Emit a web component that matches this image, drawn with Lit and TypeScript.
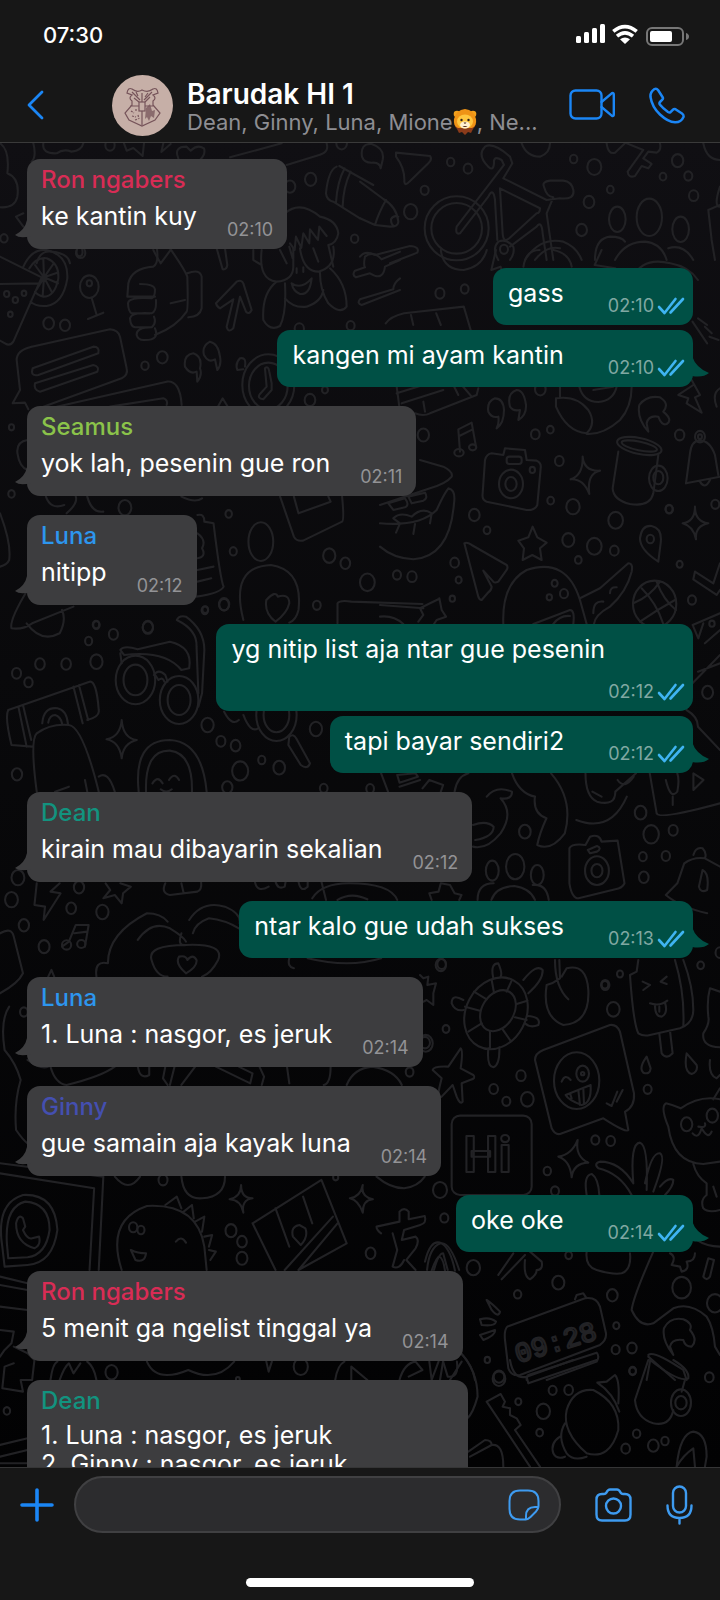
import { LitElement, html, svg, css, nothing } from "lit";
import { customElement, property } from "lit/decorators.js";

type Message = {
  from?: string;
  tone?: string;
  lines: string[];
  time: string;
  gap?: "tight" | "none";
  tail?: boolean;
  stacked?: boolean;
};

const messages: Message[] = [
  { from: "Ron ngabers", tone: "red", lines: ["ke kantin kuy"], time: "02:10", gap: "none" },
  { lines: ["gass"], time: "02:10", tail: false },
  { lines: ["kangen mi ayam kantin"], time: "02:10", gap: "tight" },
  { from: "Seamus", tone: "lime", lines: ["yok lah, pesenin gue ron"], time: "02:11" },
  { from: "Luna", tone: "blue", lines: ["nitipp"], time: "02:12" },
  { lines: ["yg nitip list aja ntar gue pesenin"], time: "02:12", tail: false, stacked: true },
  { lines: ["tapi bayar sendiri2"], time: "02:12", gap: "tight" },
  { from: "Dean", tone: "teal", lines: ["kirain mau dibayarin sekalian"], time: "02:12" },
  { lines: ["ntar kalo gue udah sukses"], time: "02:13" },
  { from: "Luna", tone: "blue", lines: ["1. Luna : nasgor, es jeruk"], time: "02:14" },
  { from: "Ginny", tone: "indigo", lines: ["gue samain aja kayak luna"], time: "02:14" },
  { lines: ["oke oke"], time: "02:14" },
  { from: "Ron ngabers", tone: "red", lines: ["5 menit ga ngelist tinggal ya"], time: "02:14" },
  { from: "Dean", tone: "teal", lines: ["1. Luna : nasgor, es jeruk", "2. Ginny : nasgor, es jeruk"], time: "" },
];

@customElement("chat-wallpaper")
export class ChatWallpaper extends LitElement {
  static styles = css`
    :host { display: block; }
    svg { display: block; width: 100%; height: 100%; }
    .ink { fill: none; stroke: #222225; stroke-linecap: round; stroke-linejoin: round; }
    .ink * { vector-effect: non-scaling-stroke; stroke-width: 2.1px; }
    .face { font-family: Roboto, "Liberation Sans", sans-serif; font-weight: 700; }
    .digits { font-family: "Liberation Mono", monospace; font-weight: 400; }
  `;

  private dots(points: number[][]) {
    return points.map(([x, y, r]) => svg`<ellipse cx=${x} cy=${y} rx=${r} ry=${r * 1.15}></ellipse>`);
  }

  private narrowDots(points: number[][]) {
    return points.map(([x, y, r]) => svg`<ellipse cx=${x} cy=${y} rx=${r * 0.7} ry=${r * 1.15}></ellipse>`);
  }

  render() {
    return html`<svg viewBox="0 143 720 1324" preserveAspectRatio="xMidYMin slice" aria-hidden="true">
      <g class="ink">
        <g transform="scale(.3333)">
          <path d="M0 430Q30 450 22 520Q60 535 52 590Q45 625 0 622M100 430Q110 470 95 485M130 430Q125 462 170 460Q190 445 215 455Q245 452 250 430M372 430l8 22l20-8l28 24l4-38M490 430l-6 26l28-24M535 475Q520 440 560 440Q570 450 572 452Q592 432 612 445Q618 462 600 480M690 472Q770 450 845 430M980 430q8 26-20 34L860 495"/>
          <path d="M1010 500Q985 510 978 580Q980 600 1000 605L1080 655M1018 498L1120 555M1034 505Q1012 545 1008 608M1052 515Q1030 560 1028 620"/>
          <path d="M855 640Q900 600 960 650Q1010 660 1015 700Q1010 730 985 735L1000 800M870 730l14 20l4-40l16 34l6-44l18 30l2-42l24 32l4-40l22 28"/>
          <path d="M70 640L48 650L70 680M110 790Q120 750 155 755Q205 760 210 790M232 745q-6 20 4 24q16 0 10-24M460 750q10 20 22 40l30-40"/>
          ${this.dots([[330, 436, 14], [932, 538, 17], [870, 560, 16], [12, 715, 11], [1064, 716, 11], [1025, 430, 16]])}
        </g>
        <g transform="translate(360 0) scale(.3333)">
          <path d="M6 470Q0 430 35 432Q75 445 68 480L62 505Q60 488 40 488Q12 490 6 470M108 458L210 468Q218 478 205 490L148 545Q135 560 133 545Q135 505 108 470Z"/>
          <path d="M0 545L70 597Q110 620 115 665Q115 680 90 680L45 675L0 655M78 600Q55 640 45 675M115 650q-15-5-22 8q0 15 8 20"/>
          <path d="M385 500Q350 465 375 440Q400 425 450 470L457 490L430 535L560 600L600 595Q645 600 640 570Q635 545 610 542L570 542Q545 545 552 560Q560 590 580 592L560 640L580 780M385 500Q400 515 402 490Q400 465 425 480L432 495L290 680Q285 705 300 700L385 590Q400 560 405 600L412 720M420 565L540 625Q540 640 530 640L448 715Q430 730 428 700ZM450 740L530 680Q545 660 548 700L560 780"/>
          <circle cx="290" cy="685" r="96" /><circle cx="290" cy="685" r="76"/><path d="M495 780Q540 710 610 725Q650 740 665 780M525 780Q560 735 600 745"/>
          <path d="M415 780Q395 745 415 725Q440 715 460 740Q465 760 450 780M0 770Q15 750 45 765L150 738Q180 740 172 758L90 790"/>
          <path d="M485 430Q500 470 540 470Q570 460 570 430M740 430q5 35 25 28l30-28M800 430L850 450L803 515Q805 535 825 528L845 498L865 505L875 492L850 475L865 455L890 458Q905 450 900 430M1030 430Q1040 480 1080 480"/>
          <ellipse cx="772" cy="658" rx="25" ry="38"/><ellipse cx="868" cy="652" rx="38" ry="56"/><ellipse cx="962" cy="688" rx="25" ry="38"/>
          <path d="M705 780Q705 715 750 710Q785 710 795 725M765 780Q795 725 855 725Q905 730 920 780M925 745Q970 730 1000 780M1080 560q-20 60 0 60M1080 615L1045 630L1055 720L1065 780"/>
          ${this.dots([[272, 486, 11], [324, 506, 13], [194, 571, 12], [152, 635, 20], [641, 477, 11], [703, 501, 21], [751, 569, 10], [687, 606, 16], [665, 690, 16], [909, 530, 10], [985, 528, 12], [953, 482, 17], [1001, 587, 14], [432, 748, 12]])}
        </g>
        <g transform="translate(0 240) scale(.3333)">
          <path d="M0 50L125 112L40 305Q30 320 15 310L0 302M0 132L120 130M70 80Q95 25 140 30Q205 45 202 115Q190 190 140 198Q105 200 92 185M88 85Q110 50 140 55Q178 70 175 115Q165 170 130 170Q112 165 105 155M132 112L130 58M132 112L105 75M132 112L160 72M132 112L172 98M132 112L174 130M132 112L155 155M132 112L128 168M132 112L110 148"/>
          <ellipse cx="268" cy="140" rx="28" ry="34"/><path d="M275 174L290 225M264 237L310 218"/>
          <path d="M470 20Q478 70 460 80Q395 85 385 130L382 170L465 170M420 132Q465 132 465 150Q465 170 455 175Q385 170 384 190Q385 215 395 220L450 220M468 180Q470 215 455 220Q395 215 390 235Q392 260 405 262L455 262M462 230Q470 250 455 262Q408 262 410 285Q415 302 435 300Q480 300 465 265M510 25Q555 90 562 110Q565 210 560 215Q530 260 465 285M512 190L555 180M562 100Q600 85 605 110V205Q600 230 565 232"/>
          <path d="M648 190L710 125Q725 118 730 130L755 210Q748 225 738 215L720 170L700 265Q685 280 680 260L700 178L660 205Q650 200 648 190M650 25L668 88Q680 90 682 75L675 25"/>
          <path d="M785 75L760 60L760 30M785 30Q775 120 830 125Q880 120 880 80L880 25M900 25Q910 95 955 95Q1010 80 1000 20M830 125Q785 160 790 240Q810 275 840 258Q860 220 855 130M960 98Q960 150 985 190Q1020 225 1040 200Q1040 130 990 85M855 175Q880 205 920 200Q965 185 970 150M875 130Q905 150 935 115Q930 165 900 162Q880 155 875 130M890 85v14M910 82v14M840 30l20 40M868 20l10 35M940 25l15 40"/>
          <path d="M1200 35L1145 58Q1120 30 1095 50Q1090 75 1095 82L1065 92Q1055 105 1068 112L1110 100Q1150 125 1155 80L1200 60M1200 115Q1180 130 1180 148L1080 178Q1070 190 1085 195L1200 150"/>
          <path d="M95 320L330 268Q355 270 360 290L380 385Q385 405 365 415L130 500M95 320Q50 330 50 360L60 450L38 490L75 488L85 508M98 385L280 320Q300 320 295 340L115 405Q90 410 98 385M105 430L280 375Q300 380 292 395L120 455Q100 450 105 430M170 500L500 425Q540 420 545 495M330 500L490 475Q505 480 500 495"/>
          <path d="M600 385Q608 350 580 340Q550 345 555 380Q570 405 590 395L592 425Q608 405 600 385M660 350Q655 310 630 305Q605 318 612 345Q625 370 645 358L652 390Q665 375 660 350M735 380Q740 350 720 355Q705 370 712 390L730 388M795 385Q805 375 808 395L815 430L815 450L790 478Q770 475 780 462L800 440ZM655 498L668 475L682 498"/>
          <ellipse cx="805" cy="435" rx="78" ry="92"/><ellipse cx="805" cy="438" rx="58" ry="70"/>
          ${this.dots([[20, 162, 8], [46, 180, 8], [72, 160, 7], [31, 223, 7], [268, 130, 8], [146, 250, 16], [195, 256, 15], [487, 352, 16], [435, 377, 11], [242, 38, 14], [898, 266, 14], [1052, 257, 12], [930, 480, 16], [975, 450, 9]])}
        </g>
        <g transform="translate(380 380) scale(.3333)">
          <path d="M50 20L60 95M50 40L130 15M65 70L190 30M130 65L135 95M105 100Q130 110 150 100L290 45L295 25M220 15L235 45M245 15L275 50"/>
          <path d="M372 90Q370 55 345 55Q320 65 325 95Q335 115 355 110Q358 130 350 145Q372 130 372 90M438 75Q432 30 410 30Q380 40 390 80Q400 95 420 90L415 120Q440 105 438 75"/>
          <path d="M528 55Q590 45 625 90Q650 130 620 160Q560 155 528 80ZM540 20V50M755 20Q755 80 720 120Q670 165 620 162M598 20Q610 65 655 66Q700 62 710 20M640 30L700 20"/>
          <path d="M805 155Q770 115 778 75Q800 45 840 52Q870 70 850 95Q880 120 860 132Q845 138 835 110Q805 105 800 130ZM940 15L895 45L925 55L920 70L965 98L945 52L960 45L935 0M1020 25Q995 40 1010 80"/>
          <path d="M240 215L235 148L275 128L288 200M238 168L278 148"/><ellipse cx="237" cy="218" rx="14" ry="11"/><ellipse cx="278" cy="202" rx="11" ry="9"/>
          <path d="M315 240Q320 222 335 220L370 225L375 205L435 210L440 240L470 242Q485 248 482 265L472 375Q465 392 440 390L320 365Q305 360 308 340Z"/><rect x="380" y="230" width="45" height="22" rx="8"/><ellipse cx="393" cy="312" rx="36" ry="43"/><ellipse cx="393" cy="312" rx="17" ry="21"/>
          <path d="M608 230Q612 275 660 272Q620 280 628 342Q610 295 572 298Q610 285 608 230M945 380Q945 425 985 430Q945 438 948 478Q940 438 908 430Q945 425 945 380"/>
          <ellipse cx="778" cy="198" rx="68" ry="24" transform="rotate(12 778 198)"/><ellipse cx="778" cy="198" rx="54" ry="13" transform="rotate(12 778 198)"/><path d="M715 215L698 325Q700 360 750 372Q810 382 820 340L835 225"/><ellipse cx="835" cy="295" rx="28" ry="38"/><ellipse cx="835" cy="293" rx="15" ry="20"/>
          <path d="M918 310L930 220Q935 180 960 182Q990 182 1005 225L1015 285M918 310L1020 290M960 305Q975 330 990 300"/>
          <path d="M120 240L190 260Q220 275 215 290Q200 310 150 325L0 375M0 430Q120 440 170 390Q190 345 205 325Q228 330 222 370Q210 530 100 538Q40 535 0 500M40 415Q60 395 95 410Q125 380 155 400L150 430M40 415L60 430L48 458M105 432L100 462M25 370L75 355Q90 375 75 382L40 390ZM85 350L135 338Q145 355 130 362L95 370Z"/>
          <path d="M458 440L472 472L500 488L480 505L485 540L457 525L428 540L432 505L415 482L445 472ZM253 490Q260 485 275 495L380 555Q385 562 380 570L355 605Q345 610 340 605L310 572L335 620Q335 630 325 637L305 660Q298 660 295 650Z"/>
          <path d="M835 545Q780 510 780 475Q785 435 815 438Q848 445 842 490ZM0 675L130 685M0 710Q40 705 70 732M178 655L185 690L198 710L170 720L162 732M150 670L175 658M150 670L120 685L130 705L115 725"/>
          <path d="M370 732Q365 610 440 570Q560 530 600 660L620 732M600 655L660 625L745 550Q760 550 755 575Q740 635 690 680Q645 705 642 732M460 732L570 690Q585 690 580 732M640 700Q640 660 670 665M690 640Q690 620 710 622M520 732Q540 705 570 708"/>
          <ellipse cx="824" cy="672" rx="65" ry="70"/><path d="M760 670Q810 650 840 605M780 725Q830 690 885 660M785 625Q830 670 850 732M830 605Q850 660 888 690M945 575L1000 610L1020 550M945 575L940 598L1010 645L1020 630M938 735L1020 700M940 740L955 775L970 730"/>
          ${this.dots([[130, 165, 17], [466, 163, 13], [511, 149, 10], [538, 243, 13], [457, 270, 8], [512, 362, 10], [579, 380, 20], [283, 405, 16], [321, 451, 10], [565, 480, 18], [643, 499, 22], [595, 540, 10], [703, 512, 13], [707, 421, 22], [868, 388, 11], [899, 165, 14], [960, 170, 15], [960, 170, 6], [1006, 373, 12], [811, 477, 11], [899, 553, 9], [936, 660, 12], [224, 548, 13], [236, 600, 9], [96, 590, 14], [51, 585, 12], [217, 656, 8], [524, 610, 9], [508, 652, 8], [552, 641, 12], [481, 28, 16], [996, 731, 8]])}
        </g>
        <g transform="translate(0 250) scale(.4592 .3333)">
          <path d="M60 570Q35 575 38 610Q42 650 60 660M100 740Q110 780 140 765M145 790Q170 760 165 740M190 740Q200 790 225 785M430 795Q445 790 445 815L465 820Q480 990 487 1010Q480 1030 428 1040M430 850Q450 870 440 895Q450 920 430 925M430 960L465 950M430 995L460 985M395 740Q425 760 440 745M610 740L640 860Q645 875 660 872L745 815Q750 810 745 740M640 740L650 790L720 755L715 740M0 790Q25 880 20 930Q15 945 0 950M60 1020Q20 1110 25 1135Q50 1140 70 1120L160 1070M58 1120Q90 1180 130 1150Q145 1110 135 1080M1310 0L1295 45L1340 55M1380 80Q1400 20 1460 40Q1500 50 1520 90M960 0Q965 60 1010 60Q1050 50 1060 0M1080 0L1070 60L1090 50L1095 70M1140 50Q1145 0 1175 0M1205 0Q1240 10 1245 50M840 220Q850 200 880 190L1010 170L1025 240M895 195L900 225M950 190L960 225"/>
          <path d="M1508 215L1540 280M1520 205l20 20M1535 230l15 20M1545 260l20 10"/>
          <ellipse cx="568" cy="875" rx="27" ry="58"/><path d="M530 1110Q500 950 590 945Q660 960 650 1080Q645 1110 630 1118M580 1050Q600 1020 605 1040Q630 1030 630 1060Q625 1090 600 1115Q575 1090 580 1050M735 1120V1060Q740 1050 765 1055L920 1062"/>
          ${this.narrowDots([[25, 532, 8], [25, 732, 10], [272, 773, 20], [498, 792, 10], [508, 904, 11], [717, 917, 19], [752, 940, 15], [800, 997, 23], [690, 1066, 12], [488, 1063, 16], [447, 1079, 9], [209, 1124, 10], [322, 1131, 16], [958, 130, 14], [1012, 117, 12], [1457, 777, 11]])}
        </g>
        <g transform="translate(0 600) scale(.4592 .3333)">
          <path d="M385 60Q390 45 405 50Q445 90 445 150L440 280L432 320M385 60Q430 90 428 140L432 280M262 150Q270 135 300 148L370 125Q420 140 412 205L395 210Q360 150 270 165ZM262 160L265 190M335 225Q345 205 360 225L365 245M338 225L345 240Q355 230 358 245"/>
          <ellipse cx="295" cy="240" rx="43" ry="73"/><ellipse cx="295" cy="240" rx="26" ry="46"/><ellipse cx="390" cy="300" rx="42" ry="72"/><ellipse cx="390" cy="300" rx="25" ry="45"/>
          <path d="M18 330L195 245Q210 240 215 330Q218 350 190 360M18 330Q10 350 25 435L70 440M40 320L58 440M50 315L68 420M160 260L180 370M172 256L192 360M92 370Q95 320 125 325Q145 330 148 372M105 368Q108 345 120 345Q132 350 135 370M80 575Q65 420 80 400Q110 370 150 375Q180 380 215 575M215 530Q235 510 250 575M120 575L150 560M185 540L190 575M265 360Q268 415 298 420Q268 430 265 475Q260 425 232 418Q262 410 265 360M302 575Q290 420 370 420Q440 425 450 575M318 575Q315 450 370 452Q420 460 418 575M332 550q12-25 22 0M368 540q12-25 22 0M350 568q12 14 24 0"/>
          <ellipse cx="602" cy="345" rx="44" ry="78"/><ellipse cx="602" cy="345" rx="28" ry="52"/><path d="M630 410Q640 400 645 415L675 490Q670 510 655 495L628 435ZM488 335Q505 380 520 360M530 345Q545 400 562 385"/>
          <path d="M830 520L845 575M865 525L905 520L910 530L870 548ZM870 560L915 540M920 565L935 540L965 555L960 575M990 575Q995 530 1020 520M1115 520Q1130 580 1165 590Q1160 640 1190 655Q1175 700 1170 735Q1200 755 1230 700Q1250 600 1200 520M1060 590Q1080 555 1115 575Q1115 600 1090 595Q1120 640 1090 700Q1060 750 1030 740M1030 675Q1060 660 1075 680Q1075 710 1035 720M1275 520Q1275 590 1300 605Q1340 620 1340 575L1385 520M1290 575L1310 590M1345 540Q1360 570 1380 530M1255 660Q1330 700 1365 590M1415 520L1430 640Q1435 660 1568 610M1450 540Q1460 600 1475 575Q1480 540 1475 520M1465 590V615M1510 520V570L1532 540ZM1535 130L1568 90M1520 215L1568 190M1508 250L1568 165M1495 330Q1520 350 1520 380L1568 450"/>
          <path d="M1240 745Q1245 730 1275 735L1285 710Q1305 700 1310 725L1345 722L1360 850Q1355 865 1340 868L1260 895Q1245 895 1240 850Z"/><ellipse cx="1300" cy="812" rx="26" ry="43"/><ellipse cx="1300" cy="812" rx="12" ry="20"/><path d="M1280 750L1300 738Q1312 745 1300 755L1285 760ZM1450 885L1475 850L1490 790Q1510 770 1535 775L1568 800M1450 885Q1480 920 1540 940M1530 810Q1545 820 1540 870Q1525 880 1522 860ZM1510 765Q1515 740 1530 745Q1540 760 1535 775"/>
          <ellipse cx="1072" cy="812" rx="14" ry="30"/><ellipse cx="1122" cy="800" rx="20" ry="38"/><ellipse cx="1170" cy="825" rx="14" ry="30"/><path d="M1040 900Q1040 850 1075 850M1070 900Q1080 860 1120 858Q1155 865 1165 900M1195 900Q1190 850 1160 855M940 900L935 880L955 875L960 850L980 855L990 880L1005 885L1000 900M700 845L710 900M680 895Q700 850 760 850Q850 850 865 900M735 900Q765 875 800 898M555 845Q560 880 585 860M600 845Q605 870 620 860L622 845M650 845Q655 880 670 860V845"/>
          <path d="M80 850L75 915L98 920L95 960L132 880L110 875L130 850M230 850L240 870L225 895L250 885L265 910L268 880L285 860L262 850M360 850Q350 880 370 885L430 875Q440 870 438 845M395 850L400 880M135 1040L150 1025L165 975L193 975L185 1040M162 1000L190 995"/><ellipse cx="145" cy="1035" rx="10" ry="14"/><ellipse cx="177" cy="1032" rx="9" ry="12"/>
          <path d="M210 1130Q205 1080 235 1090Q235 1000 320 940Q350 940 365 965M300 1020Q330 960 370 985Q400 1010 405 1025M395 1000Q385 1040 405 1035Q490 1030 475 1080Q460 1120 440 1130M405 1035Q320 1035 330 1080Q340 1130 365 1130M412 960Q440 900 490 920Q525 940 522 970M420 1000Q425 970 455 955Q490 960 520 985M405 1120Q380 1090 390 1070Q405 1065 408 1080Q420 1060 428 1080Q430 1100 405 1120M0 1000Q25 980 30 1010L50 1120Q40 1150 0 1180M105 1130L112 1110L118 1130M670 1075Q760 1105 830 1075M630 1075Q625 1100 640 1105"/>
          ${this.narrowDots([[210, 75, 10], [193, 123, 11], [247, 103, 14], [322, 83, 16], [87, 192, 15], [144, 192, 15], [210, 185, 19], [36, 220, 14], [62, 247, 13], [37, 523, 16], [452, 375, 19], [481, 424, 14], [513, 437, 15], [570, 480, 11], [523, 513, 25], [608, 503, 18], [495, 562, 16], [688, 387, 19], [446, 31, 10], [488, 14, 15], [1541, 277, 17], [1395, 638, 18], [1466, 691, 14], [1418, 703, 24], [1143, 695, 18], [1400, 770, 12], [1450, 768, 13], [1402, 832, 15], [39, 833, 20], [25, 899, 20], [172, 862, 16], [155, 925, 15], [223, 936, 19], [96, 1040, 17], [52, 976, 16], [705, 565, 12], [806, 566, 12], [1568, 1058, 14], [960, 1095, 16], [1318, 1155, 13]])}
        </g>
        <g transform="translate(0 970) scale(.4592 .3333)">
          <path d="M20 110Q0 150 10 240Q35 280 45 330Q30 400 35 480Q50 510 60 520M60 270Q90 300 105 290M110 290Q120 340 145 345Q220 320 250 290M300 290Q305 330 325 315V290M360 290L355 325L365 345M380 290L370 345M425 290L395 345M470 290L545 340L550 310L520 290M565 290L575 320L570 345M625 290L630 340M705 345Q720 340 720 290M755 345Q770 295 810 290Q860 300 875 345"/>
          <path d="M0 580L225 620L215 900M0 610L205 655L195 900M5 830Q-10 700 50 675Q120 670 125 780Q115 880 60 885L10 890L5 830M15 820Q10 710 55 695Q108 700 108 780Q100 855 60 862L18 865ZM35 760Q40 730 50 745L55 770L50 780Q60 810 70 805L85 800Q90 825 75 835Q35 820 35 760"/>
          <path d="M265 900Q230 750 320 708Q430 700 445 830L450 900M360 705L385 680L395 715M400 725L418 705L422 745M425 755L445 740L440 785M445 800L462 795L455 830M455 840L470 845L458 870M285 840Q300 850 318 850Q315 880 295 870ZM383 815Q395 795 405 818M250 620Q280 670 305 620M395 620Q400 690 440 685Q490 680 490 620M525 645Q525 685 550 685Q525 690 530 728Q525 690 500 688Q525 680 525 645M790 645Q785 680 812 688Q790 690 790 728Q780 690 762 685Q785 680 790 645M820 620Q850 655 880 655Q910 650 925 620"/>
          <path d="M550 760L700 630L755 820L650 900M550 760L600 900M600 715L630 830M660 680L680 760M725 740L620 900M735 760L650 900M652 765Q632 770 638 800L655 825Q672 800 665 775Z"/>
          <path d="M820 770L870 755V725Q880 710 890 725V748L925 738Q930 760 915 765L880 780L875 810L905 800Q915 810 905 835L885 870L905 900M830 790Q820 780 820 770M855 790L865 840L855 890Q870 900 880 870M930 900Q935 830 960 820Q980 815 1000 900M945 900Q955 850 965 850L975 900"/>
          <path d="M0 920L60 940M0 945L60 960M0 1010L60 1020M0 1080L30 1085L25 1120L10 1140L0 1160M30 1130L60 1150L75 1170L70 1230L45 1230L50 1265L5 1255L10 1190L30 1180M110 1230Q115 1180 125 1175M210 1230Q205 1190 190 1175M130 1230Q140 1190 150 1180L160 1210L175 1180M320 1175Q340 1240 410 1200Q470 1240 510 1175M580 1175L585 1205L592 1175M730 1230Q735 1185 750 1175M765 1230V1190L800 1230M870 1230Q880 1180 905 1175M890 1220L920 1200L905 1175M935 1175L940 1230L955 1175M1000 1145Q1040 1200 1040 1280Q1030 1330 1018 1345M965 1175L975 1220Q1000 1225 995 1175M0 1425L60 1405M0 1460L60 1440M0 1480L60 1480"/>
          ${this.narrowDots([[52, 126, 12], [892, 306, 12], [927, 220, 22], [355, 630, 14], [503, 782, 17], [527, 815, 15], [527, 865, 17], [731, 622, 8], [807, 850, 15], [290, 772, 13], [307, 780, 11], [243, 1207, 19], [655, 1190, 22], [15, 1323, 10], [518, 1228, 6]])}
        </g>
        <g transform="translate(420 960) scale(.3333)">
          <ellipse cx="228" cy="160" rx="90" ry="112" transform="rotate(28 228 160)"/><ellipse cx="234" cy="152" rx="48" ry="66" transform="rotate(32 234 152)"/>
          <path d="M275 62L260 95M322 122L290 132M320 180L285 172M270 240L248 208M210 265V215M145 215L185 190M135 140L180 152M162 95L200 118M215 60L222 98M220 55Q210 10 235 10Q248 40 242 50M310 60Q350 10 368 30Q370 60 325 100M130 120Q95 100 95 130Q105 155 132 150M322 168Q365 170 355 195Q330 205 315 190M205 265Q200 320 220 322Q240 315 238 262"/>
          <path d="M405 0Q405 80 445 118M418 0L420 55Q400 70 380 75Q365 170 430 195Q510 190 505 90Q500 10 440 25L425 50M0 45L10 55L25 50L22 75L48 70L40 100V135L20 120L0 130"/>
          <path d="M655 0L650 35L630 45Q640 190 655 220Q670 230 690 225L780 205Q820 190 820 150Q820 80 790 0M765 0Q795 100 790 200M668 65L690 75L670 90M740 50L722 65L740 72M690 130Q720 140 742 122M705 135Q705 170 725 170Q745 160 735 128M718 140V155M718 220L725 280Q740 300 758 280L750 212M900 95L870 85Q860 120 865 170Q870 190 850 220Q845 260 900 262"/>
          <path d="M122 265Q130 270 122 325L160 345Q170 355 150 360L125 370L128 425Q120 435 110 410L98 375L65 410Q50 415 60 375L65 355L38 330Q40 318 85 320Z"/>
          <path d="M370 270L570 195Q590 192 600 215L642 400Q645 440 615 455L625 510Q620 520 550 475L420 522Q405 525 395 505L345 300Q345 280 370 270Z"/><ellipse cx="470" cy="362" rx="68" ry="85"/><ellipse cx="488" cy="341" rx="19" ry="24"/><circle cx="488" cy="341" r="5"/><path d="M425 365Q435 340 452 360M437 405L512 375Q515 430 485 435Q445 420 437 405M450 400L455 415M475 390L480 435M490 385L492 430M560 430L575 438L592 395M590 425L608 390"/>
          <path d="M680 290Q655 325 670 338Q690 345 692 325ZM800 280Q790 335 815 342Q835 335 830 315ZM870 300Q865 345 890 355L900 345M745 500Q720 440 738 430Q760 435 782 445Q840 405 900 418M745 500Q760 610 850 612L900 605M880 418L900 385M820 612Q830 650 860 670V705Q840 720 850 745Q865 760 900 750M880 680L890 710M835 500Q860 505 855 490M818 520Q835 540 845 505Q865 540 875 515"/><ellipse cx="800" cy="493" rx="17" ry="21"/><ellipse cx="877" cy="467" rx="17" ry="21"/>
          <rect x="95" y="467" width="240" height="238" rx="25"/><text class="face" x="130" y="636" font-size="150">Hi</text>
          <path d="M473 540Q465 590 505 608Q460 610 455 652Q450 600 415 590Q455 585 473 540M500 705Q490 645 515 642Q535 655 538 705M635 705Q600 640 535 625Q520 610 540 605Q600 605 640 670M640 670Q630 550 660 548Q685 555 680 690M675 670Q695 575 720 580Q740 590 700 695M720 680Q745 650 760 660Q760 680 735 705"/>
          <path d="M235 945L280 880M245 958L315 885M315 900Q310 950 330 958Q350 945 350 930Q370 930 365 905L330 875M500 875Q495 920 530 930Q580 945 605 940Q635 930 630 880M700 875Q640 1010 635 1050Q660 1105 700 1090L760 1045Q810 1025 860 1070Q880 1100 885 1160L900 1185M750 880Q770 890 755 915L780 920L785 935Q810 930 800 905Q825 905 825 880M865 895L850 950Q860 965 870 950L882 900ZM830 840Q860 860 900 860"/>
          <path d="M262 1100L495 1015Q530 1010 540 1040L558 1120Q560 1140 540 1155L300 1245Q275 1250 265 1225L255 1140Q252 1110 262 1100M465 1018L470 1005L490 1000L498 1012M320 1250V1260M325 1245L530 1178Q540 1190 530 1205L380 1260M200 1020Q215 1030 240 1055Q235 1075 215 1050ZM180 1078Q210 1070 228 1085Q225 1100 185 1095ZM180 1125L225 1110Q228 1125 190 1140Z"/>
          <text class="digits" x="294" y="1210" font-size="84" transform="rotate(-17 294 1210)">09:28</text>
          <path d="M760 1185Q725 1140 732 1105Q750 1070 790 1078Q820 1090 810 1110Q835 1140 815 1160Q795 1160 790 1140Q755 1135 750 1160ZM685 1185Q700 1170 790 1230L800 1260M685 1190L765 1260M690 1205L680 1260M15 905Q30 840 60 848Q90 860 105 932M35 932Q50 890 58 890Q70 895 75 932M60 1260L70 1200M120 1175Q160 1220 165 1260M90 1260L125 1205"/>
          ${this.dots([[65, 12, 13], [78, 207, 10], [15, 248, 15], [303, 347, 14], [221, 387, 13], [259, 424, 12], [322, 418, 19], [555, 74, 10], [600, 42, 9], [580, 148, 19], [842, 16, 10], [683, 388, 12], [526, 540, 12], [572, 543, 13], [382, 633, 11], [405, 693, 12], [60, 690, 21], [73, 774, 12], [160, 923, 20], [415, 968, 18], [293, 1003, 11], [577, 1006, 16], [446, 886, 10], [785, 983, 28], [589, 1097, 9], [587, 1169, 12], [636, 1164, 14], [638, 1232, 10], [202, 1200, 8], [237, 1250, 16], [885, 1030, 24]])}
        </g>
        <g transform="translate(360 1360) scale(.3333)">
          <path d="M380 125L422 102L435 125L428 140L450 145L450 165L470 175L482 195L465 210L540 320M380 125L510 320M325 275L375 240Q395 240 395 255L330 290M395 255Q430 250 430 320"/>
          <path d="M700 90Q640 85 620 150Q605 215 680 280Q750 300 775 210Q780 130 700 90M712 68Q760 100 778 155M712 68L740 65L765 45Q780 60 775 130M615 190Q590 230 620 280Q640 305 680 290M600 230Q570 250 580 280Q590 300 615 290"/>
          <path d="M865 0L825 120Q830 175 880 190Q930 200 940 150M870 0Q960 70 985 55Q990 30 940 0M975 60L965 95"/><ellipse cx="963" cy="128" rx="30" ry="40"/><ellipse cx="963" cy="128" rx="17" ry="20"/>
          <path d="M950 320Q960 220 1000 215Q1040 220 1040 290L1035 320M950 320Q970 285 1000 265L1005 320M450 0Q460 60 500 50L640 0M500 50L505 70L710 0"/>
          ${this.dots([[417, 56, 19], [475, 125, 9], [550, 154, 20], [578, 91, 12], [626, 90, 13], [539, 218, 10], [818, 34, 10], [1048, 52, 13], [830, 221, 11], [797, 266, 13], [880, 257, 16], [915, 243, 11]])}
        </g>
      </g>
    </svg>`;
  }
}

@customElement("chat-bubble")
export class ChatBubble extends LitElement {
  @property({ attribute: false }) message!: Message;

  static styles = css`
    :host { display: flex; }
    .bubble { position: relative; box-sizing: border-box; border-radius: 13px; }
    .in { background: #3d3d3f; padding: 8px 14px 9px; }
    .out { background: #005045; padding: 11px 8px 9px 15px; margin-left: auto; }
    .long { min-width: 441px; padding-bottom: 60px; }
    .name { margin: 0 0 9px; font-size: 24px; line-height: 26px; font-weight: 500; }
    .long .name { margin-bottom: 7px; }
    .red { color: #d82c55; }
    .lime { color: #8bc34a; }
    .blue { color: #2d96ee; }
    .teal { color: #12937f; }
    .indigo { color: #444fb0; }
    .row { display: flex; align-items: flex-end; gap: 30px; }
    .out .row { gap: 44px; }
    .stacked .row { flex-direction: column; gap: 10px; }
    .text { margin: 0; padding-bottom: 9px; color: #fff; font-size: 25px; line-height: 29px; white-space: nowrap; }
    .out .text { padding-bottom: 8px; }
    .stacked .text { padding-right: 80px; }
    .meta { display: flex; align-items: center; gap: 3px; font-size: 18px; line-height: 20px; color: #939396; }
    .out .meta { color: #80a8a2; }
    .ticks { display: block; width: 28px; height: 18px; fill: none; stroke: #3fb4f2; stroke-width: 2.6; stroke-linecap: round; stroke-linejoin: round; }
    .tail { position: absolute; bottom: 9px; width: 17px; height: 22px; }
    .in .tail { right: calc(100% - 4px); fill: #3d3d3f; }
    .out .tail { left: calc(100% - 1px); fill: #005045; }
  `;

  render() {
    const m = this.message;
    const incoming = !!m.from;
    const long = m.lines.length > 1;
    return html`<article class="bubble ${incoming ? "in" : "out"} ${m.stacked ? "stacked" : ""} ${long ? "long" : ""}">
      ${incoming ? html`<h2 class="name ${m.tone}">${m.from}</h2>` : nothing}
      <div class="row">
        <p class="text">${m.lines.map((line, i) => html`${i ? html`<br>` : nothing}${line}`)}</p>
        ${m.time
          ? html`<div class="meta">
              <time>${m.time}</time>
              ${incoming
                ? nothing
                : html`<svg class="ticks" viewBox="0 0 28 18" role="img" aria-label="Read"><path d="M2 10l5.500 6L18.500 2M13.500 15.500L26 2"/></svg>`}
            </div>`
          : nothing}
      </div>
      ${m.tail === false || long
        ? nothing
        : incoming
          ? html`<svg class="tail" viewBox="0 0 17 22" aria-hidden="true"><path d="M13 2Q11 12 1 17Q6 21 17 18V2Z"/></svg>`
          : html`<svg class="tail" viewBox="0 0 17 22" aria-hidden="true"><path d="M0 0Q4 12 17 17Q11 22 0 20Z"/></svg>`}
    </article>`;
  }
}

@customElement("app-root")
export class AppRoot extends LitElement {
  static styles = css`
    :host {
      display: flex;
      flex-direction: column;
      height: 100vh;
      overflow: hidden;
      background: #171717;
      color: #fff;
      font-family: Inter, "Liberation Sans", sans-serif;
    }
    svg { display: block; }
    button { padding: 0; border: 0; background: none; cursor: pointer; }
    .status { display: flex; justify-content: space-between; align-items: center; box-sizing: border-box; height: 68px; padding: 2px 31px 0 43px; font-size: 22px; line-height: 26px; font-weight: 500; }
    .bar { display: flex; align-items: center; height: 74px; padding: 0 35px 0 27px; border-bottom: 1px solid #3a3a3a; }
    .back { margin-right: 68px; }
    .avatar { flex: none; margin-right: 14px; }
    .who { flex: 1; min-width: 0; padding-top: 4px; }
    .title { margin: 0; font-size: 28px; line-height: 30px; font-weight: 600; }
    .members { display: flex; align-items: center; margin: 0; font-size: 22px; line-height: 26px; color: #8e8e93; white-space: nowrap; }
    .lion { flex: none; }
    .call { margin-left: 34px; }
    .line { fill: none; stroke: #1b86f5; stroke-linecap: round; stroke-linejoin: round; }
    .soft { stroke: #3e9bf0; }
    .chat { position: relative; flex: 1; min-height: 0; overflow: hidden; background: linear-gradient(#100f13, #09090b 40%, #020203); }
    .wall { position: absolute; inset: 0; }
    .log { position: relative; display: flex; flex-direction: column; padding: 16px 27px 0; }
    .item { margin-top: 19px; }
    .item.tight { margin-top: 5px; }
    .item.none { margin-top: 0; }
    .foot { padding: 8px 0 13px; border-top: 1px solid #353536; }
    .compose { display: flex; align-items: center; gap: 34px; padding: 0 27px 0 20px; }
    .plus { margin-right: -14px; }
    .field { display: flex; align-items: center; flex: 1; box-sizing: border-box; height: 57px; padding: 0 19px 0 24px; border: 2px solid #404042; border-radius: 29px; background: #2c2c2e; }
    .entry { flex: 1; min-width: 0; padding: 0; border: 0; outline: 0; background: none; color: #fff; font: inherit; font-size: 25px; }
    .home { width: 228px; height: 9px; margin: 45px auto 0; border-radius: 5px; background: #fff; }
  `;

  render() {
    return html`
      <div class="status">
        <time>07:30</time>
        <svg width="113" height="24" viewBox="0 0 113 24" role="img" aria-label="Signal, Wi-Fi and battery">
          <g fill="#fff"><rect y="13" width="5" height="7" rx="1.500"/><rect x="8" y="9" width="5" height="11" rx="1.500"/><rect x="16" y="5" width="5" height="15" rx="1.500"/><rect x="24" y="1" width="5" height="19" rx="1.500"/><path d="M44 16.200Q49 12.800 54 16.200L49 21Z"/></g>
          <g fill="none" stroke="#fff" stroke-width="3.600"><path d="M37.300 8.300Q49-1.200 60.700 8.300M41 13.200Q49 6.500 57 13.200"/></g>
          <rect x="71" y="5" width="36" height="17" rx="5" fill="none" stroke="#777" stroke-width="2"/><rect x="74" y="8" width="22" height="11" rx="2" fill="#fff"/><path d="M110 10Q113 11 113 13.500T110 17Z" fill="#777"/>
        </svg>
      </div>
      <header class="bar">
        <button class="back" aria-label="Back"><svg class="line" width="17" height="30" viewBox="0 0 17 30" stroke-width="2.800"><path d="M15 2L2 15L15 28"/></svg></button>
        <svg class="avatar" width="61" height="61" viewBox="0 0 61 61" role="img" aria-label="Group picture">
          <circle cx="30.500" cy="30.500" r="30.500" fill="#c6afa7"/>
          <g fill="none" stroke="#76545a" stroke-width="1.200"><path d="M30 15Q25 18 20 14Q16 12 15 18L20 20Q16 23 20 26V30L13 38L17 45L30 51L43 45L48 38L41 30V26Q45 23 41 20L46 18Q45 12 41 14Q36 18 30 15ZM30 18V27M30 36V50M18 31H27M33 31H42M20 17l8 8M40 17l-8 8M22 23l5 4M38 22l-5 5M24 17l2 4M36 18l-3 4"/><rect x="27" y="27" width="6" height="9"/><path d="M19 36l3 2M20 41l4 1M24 34v3M26 40l1 4M23 45l3-1" stroke-dasharray="2 1"/></g>
          <path d="M34 33l4-4l2 7l3-1l-1 8l-3-2l-2 5l-2-4l-2 2Z" fill="#76545a" opacity=".75"/>
        </svg>
        <div class="who">
          <h1 class="title">Barudak HI 1</h1>
          <p class="members">Dean, Ginny, Luna, Mione<svg class="lion" width="24" height="26" viewBox="0 0 24 26" role="img" aria-label="Lion">
            <path d="M3 9Q0 17 4 20L6 24L9 23L12 26L15 23L18 24L20 20Q24 17 21 9Z" fill="#8a3b1a"/><circle cx="4" cy="5" r="3.300" fill="#f2a11c"/><circle cx="20" cy="5" r="3.300" fill="#f2a11c"/><path d="M12 0Q3 1 1 10Q0 17 5 19L19 19Q24 17 23 10Q21 1 12 0Z" fill="#ef9316"/><ellipse cx="12" cy="12.500" rx="8" ry="7" fill="#ffc63f"/><ellipse cx="12" cy="16" rx="5" ry="3.500" fill="#fff0cf"/><circle cx="8.500" cy="11" r="1.200" fill="#332015"/><circle cx="15.500" cy="11" r="1.200" fill="#332015"/><path d="M10.500 13.500h3L12 15ZM9.500 17Q12 19 14.500 17" fill="#4a2515"/></svg>, Ne...</p>
        </div>
        <button class="call" aria-label="Video call"><svg class="line" width="46" height="32" viewBox="0 0 46 32" stroke-width="2.400"><rect x="1.500" y="1.500" width="31" height="28" rx="5"/><path d="M32.500 13L43 4.200Q44.800 3.500 44.800 5.500V25.500Q44.800 27.500 43 26.800L32.500 18"/></svg></button>
        <button class="call" aria-label="Voice call"><svg class="line" width="36" height="37" viewBox="0 0 36 37" stroke-width="2.500"><path d="M5.500 2Q1 5 1.500 10Q3 20 11 27.500Q19 35 26 35.300Q32 35.500 34.500 30Q35 28 33 26.500L26.500 22.200Q25 21.500 23.800 22.800L21.500 25.200Q20.500 26 19 25Q14 21.500 10.800 17.500Q10 16 11 15L13.300 12.700Q14.500 11.500 13.500 10L9 3Q7.500 1 5.500 2Z"/></svg></button>
      </header>
      <main class="chat">
        <chat-wallpaper class="wall"></chat-wallpaper>
        <div class="log">
          ${messages.map((m) => html`<chat-bubble class="item ${m.gap ?? ""}" .message=${m}></chat-bubble>`)}
        </div>
      </main>
      <footer class="foot">
        <div class="compose">
          <button class="plus" aria-label="Attach"><svg class="line" width="34" height="34" viewBox="0 0 34 34" stroke-width="3.600"><path d="M17 2V32M2 17H32"/></svg></button>
          <div class="field">
            <input class="entry" type="text" aria-label="Message">
            <button aria-label="Stickers"><svg class="line soft" width="32" height="32" viewBox="0 0 32 32" stroke-width="2"><path d="M17 30.500H12Q1.500 30.500 1.500 20V12Q1.500 1.500 12 1.500H20Q30.500 1.500 30.500 12V17Q30.500 20 28 22.500L22.500 28Q20 30.500 17 30.500ZM18 30.500V27Q18 18 27 18H30.500"/></svg></button>
          </div>
          <button aria-label="Camera"><svg class="line soft" width="37" height="34" viewBox="0 0 37 34" stroke-width="2.400"><path d="M7 6H9Q10.500 6 11.500 4.500Q13 1.500 15 1.500H22Q24 1.500 25.500 4.500Q26.500 6 28 6H30Q35.500 6 35.500 11.500V26.500Q35.500 32.500 30 32.500H7Q1.500 32.500 1.500 26.500V11.500Q1.500 6 7 6Z"/><circle cx="18.500" cy="18" r="7.500"/></svg></button>
          <button aria-label="Record voice message"><svg class="line soft" width="27" height="40" viewBox="0 0 27 40" stroke-width="2.400"><rect x="7" y="1.500" width="13" height="26" rx="6.500"/><path d="M1.500 20.500Q1.500 33 13.500 33T25.500 20.500M13.500 33V38.500"/></svg></button>
        </div>
        <div class="home"></div>
      </footer>
    `;
  }
}
